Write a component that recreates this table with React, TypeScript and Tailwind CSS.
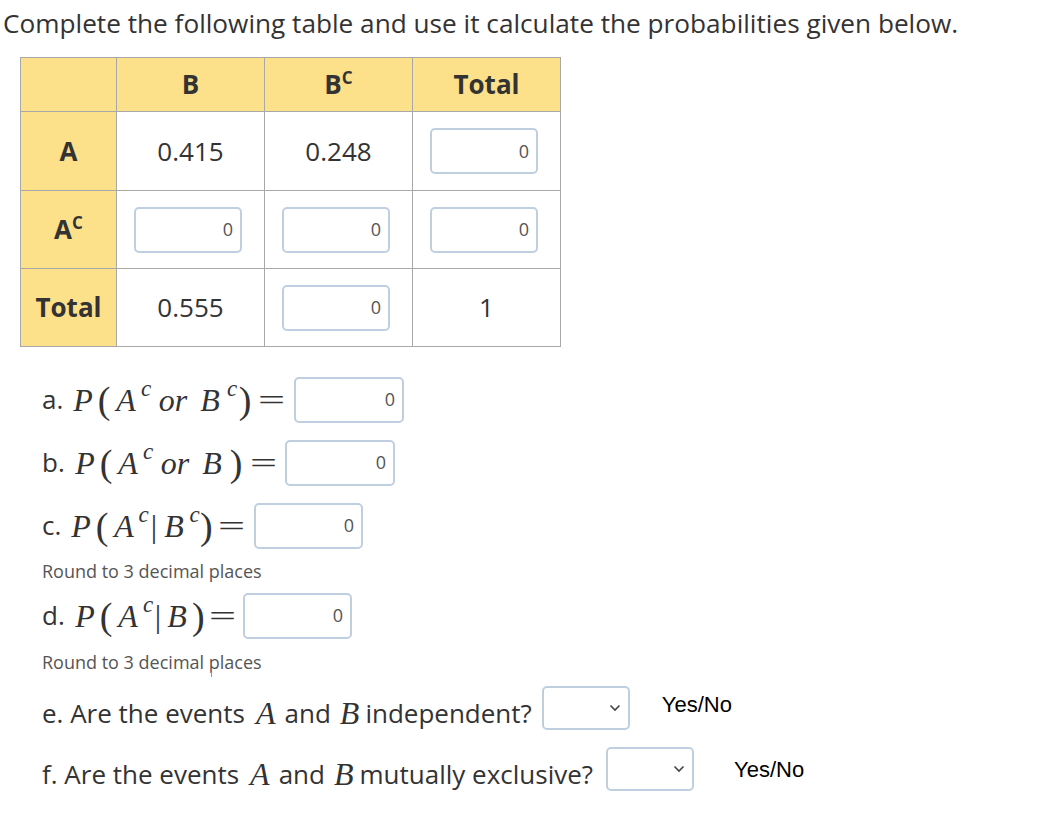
import React from "react";

const sans = { fontFamily: '"Open Sans", "Noto Sans", sans-serif' };
const serif = { fontFamily: '"Liberation Serif", "DejaVu Serif", serif' };
const arial = { fontFamily: '"Liberation Sans", Arial, sans-serif' };

function Box({ w = "w-[108px]" }: { w?: string }) {
  return (
    <div
      className={`${w} h-[46px] border-2 border-[#c0cfe0] rounded-[5px] bg-white flex items-center justify-end pr-[7px] text-[18px] text-[#555]`}
      style={sans}
    >
      0
    </div>
  );
}

function Select() {
  return (
    <div className="w-[88px] h-[44px] border-2 border-[#c0cfe0] rounded-[5px] bg-white flex items-center justify-end pr-[7px]">
      <svg width="12" height="8" viewBox="0 0 12 8">
        <path d="M1.5 1.5 L6 6 L10.5 1.5" fill="none" stroke="#444" strokeWidth="1.6" />
      </svg>
    </div>
  );
}

function Cell({ children, yellow, bold }: { children?: React.ReactNode; yellow?: boolean; bold?: boolean }) {
  return (
    <td
      className={`border border-[#a8a8a8] text-center align-middle p-0 text-[26px] text-[#333] ${yellow ? "bg-[#fde08a]" : "bg-white"} ${bold ? "font-bold" : ""}`}
    >
      {children}
    </td>
  );
}

function InBox() {
  return (
    <div className="flex justify-start pl-[17px]">
      <Box />
    </div>
  );
}

const tok = "inline-block text-center text-[32px] leading-[40px]";
const par = "inline-block text-center text-[38px] leading-[40px]";
const sup = "inline-block text-center text-[23px] leading-[20px] relative -top-[11px]";
const eq = "inline-block text-center text-[30px] leading-[40px]";

export default function App() {
  return (
    <div className="w-[1060px] h-[834px] bg-white text-[#333] relative" style={sans}>
      <div className="pl-[3px] pt-[5px] text-[26.2px] leading-[36px] text-[#333]">
        Complete the following table and use it calculate the probabilities given below.
      </div>
      <table className="ml-[20px] mt-[16px] border-collapse" style={{ tableLayout: "fixed" }}>
        <colgroup>
          <col className="w-[96px]" />
          <col className="w-[148px]" />
          <col className="w-[148px]" />
          <col className="w-[148px]" />
        </colgroup>
        <tbody>
          <tr className="h-[54px]">
            <Cell yellow />
            <Cell yellow bold>B</Cell>
            <Cell yellow bold>
              B<span className="text-[17px] relative -top-[10px]">C</span>
            </Cell>
            <Cell yellow bold>Total</Cell>
          </tr>
          <tr className="h-[79px]">
            <Cell yellow bold>A</Cell>
            <Cell>0.415</Cell>
            <Cell>0.248</Cell>
            <Cell><InBox /></Cell>
          </tr>
          <tr className="h-[78px]">
            <Cell yellow bold>
              A<span className="text-[17px] relative -top-[10px]">C</span>
            </Cell>
            <Cell><InBox /></Cell>
            <Cell><InBox /></Cell>
            <Cell><InBox /></Cell>
          </tr>
          <tr className="h-[78px]">
            <Cell yellow bold>Total</Cell>
            <Cell>0.555</Cell>
            <Cell><InBox /></Cell>
            <Cell>1</Cell>
          </tr>
        </tbody>
      </table>

      <div className="pl-[42px] mt-[29px] flex flex-col text-[26px] text-[#333]">
        {/* a */}
        <div className="flex items-center h-[47px]">
          <span className="w-[28px]">a.</span>
          <span className="flex items-center" style={serif}>
            <i className={`${tok} w-[26px]`}>P</i>
            <span className={`${par} w-[16px]`}>(</span>
            <i className={`${tok} w-[28px]`}>A</i>
            <i className={`${sup} w-[12px]`}>c</i>
            <i className={`${tok} w-[42px]`}>or</i>
            <i className={`${tok} w-[32px]`}>B</i>
            <i className={`${sup} w-[12px]`}>c</i>
            <span className={`${par} w-[14px]`}>)</span>
            <span className={`${eq} w-[38px]`}><span className="inline-block scale-x-[1.6]">=</span></span>
          </span>
          <div className="ml-[4px]"><Box w="w-[110px]" /></div>
        </div>
        {/* b */}
        <div className="flex items-center h-[47px] mt-[16px]">
          <span className="w-[30px]">b.</span>
          <span className="flex items-center" style={serif}>
            <i className={`${tok} w-[26px]`}>P</i>
            <span className={`${par} w-[16px]`}>(</span>
            <i className={`${tok} w-[28px]`}>A</i>
            <i className={`${sup} w-[12px]`}>c</i>
            <i className={`${tok} w-[42px]`}>or</i>
            <i className={`${tok} w-[32px]`}>B</i>
            <span className={`${par} w-[16px]`}>)</span>
            <span className={`${eq} w-[38px]`}><span className="inline-block scale-x-[1.6]">=</span></span>
          </span>
          <div className="ml-[3px]"><Box w="w-[110px]" /></div>
        </div>
        {/* c */}
        <div className="flex items-center h-[47px] mt-[16px]">
          <span className="w-[26px]">c.</span>
          <span className="flex items-center" style={serif}>
            <i className={`${tok} w-[26px]`}>P</i>
            <span className={`${par} w-[16px]`}>(</span>
            <i className={`${tok} w-[28px]`}>A</i>
            <i className={`${sup} w-[11px]`}>c</i>
            <span className={`${tok} w-[10px]`}>|</span>
            <i className={`${tok} w-[30px]`}>B</i>
            <i className={`${sup} w-[11px]`}>c</i>
            <span className={`${par} w-[12px]`}>)</span>
            <span className={`${eq} w-[38px]`}><span className="inline-block scale-x-[1.6]">=</span></span>
          </span>
          <div className="ml-[4px]"><Box w="w-[109px]" /></div>
        </div>
        <div className="text-[18px] text-[#555] mt-[9px] leading-[26px]">Round to 3 decimal places</div>
        {/* d */}
        <div className="flex items-center h-[47px] mt-[8px]">
          <span className="w-[30px]">d.</span>
          <span className="flex items-center" style={serif}>
            <i className={`${tok} w-[26px]`}>P</i>
            <span className={`${par} w-[16px]`}>(</span>
            <i className={`${tok} w-[28px]`}>A</i>
            <i className={`${sup} w-[12px]`}>c</i>
            <span className={`${tok} w-[8px]`}>|</span>
            <i className={`${tok} w-[30px]`}>B</i>
            <span className={`${par} w-[12px]`}>)</span>
            <span className={`${eq} w-[36px]`}><span className="inline-block scale-x-[1.6]">=</span></span>
          </span>
          <div className="ml-[3px]"><Box w="w-[109px]" /></div>
        </div>
        <div className="text-[18px] text-[#555] mt-[10px] leading-[26px]">Round to 3 decimal places</div>
        <div className="ml-[169px] w-[1px] h-[5px] bg-[#999] mt-[-3px]" />
        {/* e */}
        <div className="flex items-center h-[44px] mt-[9px]">
          <span className="relative top-[5px]">e. Are the events</span>
          <i className="text-[32px] ml-[11px] relative top-[5px]" style={serif}>A</i>
          <span className="ml-[9px] relative top-[5px]">and</span>
          <i className="text-[32px] ml-[9px] relative top-[5px]" style={serif}>B</i>
          <span className="ml-[6px] relative top-[5px]">independent?</span>
          <div className="ml-[10px]"><Select /></div>
          <span className="ml-[32px] text-[22px] text-black -mt-[8px]" style={arial}>Yes/No</span>
        </div>
        {/* f */}
        <div className="flex items-center h-[44px] mt-[17px]">
          <span className="relative top-[5px]">f. Are the events</span>
          <i className="text-[32px] ml-[11px] relative top-[5px]" style={serif}>A</i>
          <span className="ml-[9px] relative top-[5px]">and</span>
          <i className="text-[32px] ml-[9px] relative top-[5px]" style={serif}>B</i>
          <span className="ml-[6px] relative top-[5px]">mutually exclusive?</span>
          <div className="ml-[13px]"><Select /></div>
          <span className="ml-[40px] text-[22px] text-black" style={arial}>Yes/No</span>
        </div>
      </div>
    </div>
  );
}
